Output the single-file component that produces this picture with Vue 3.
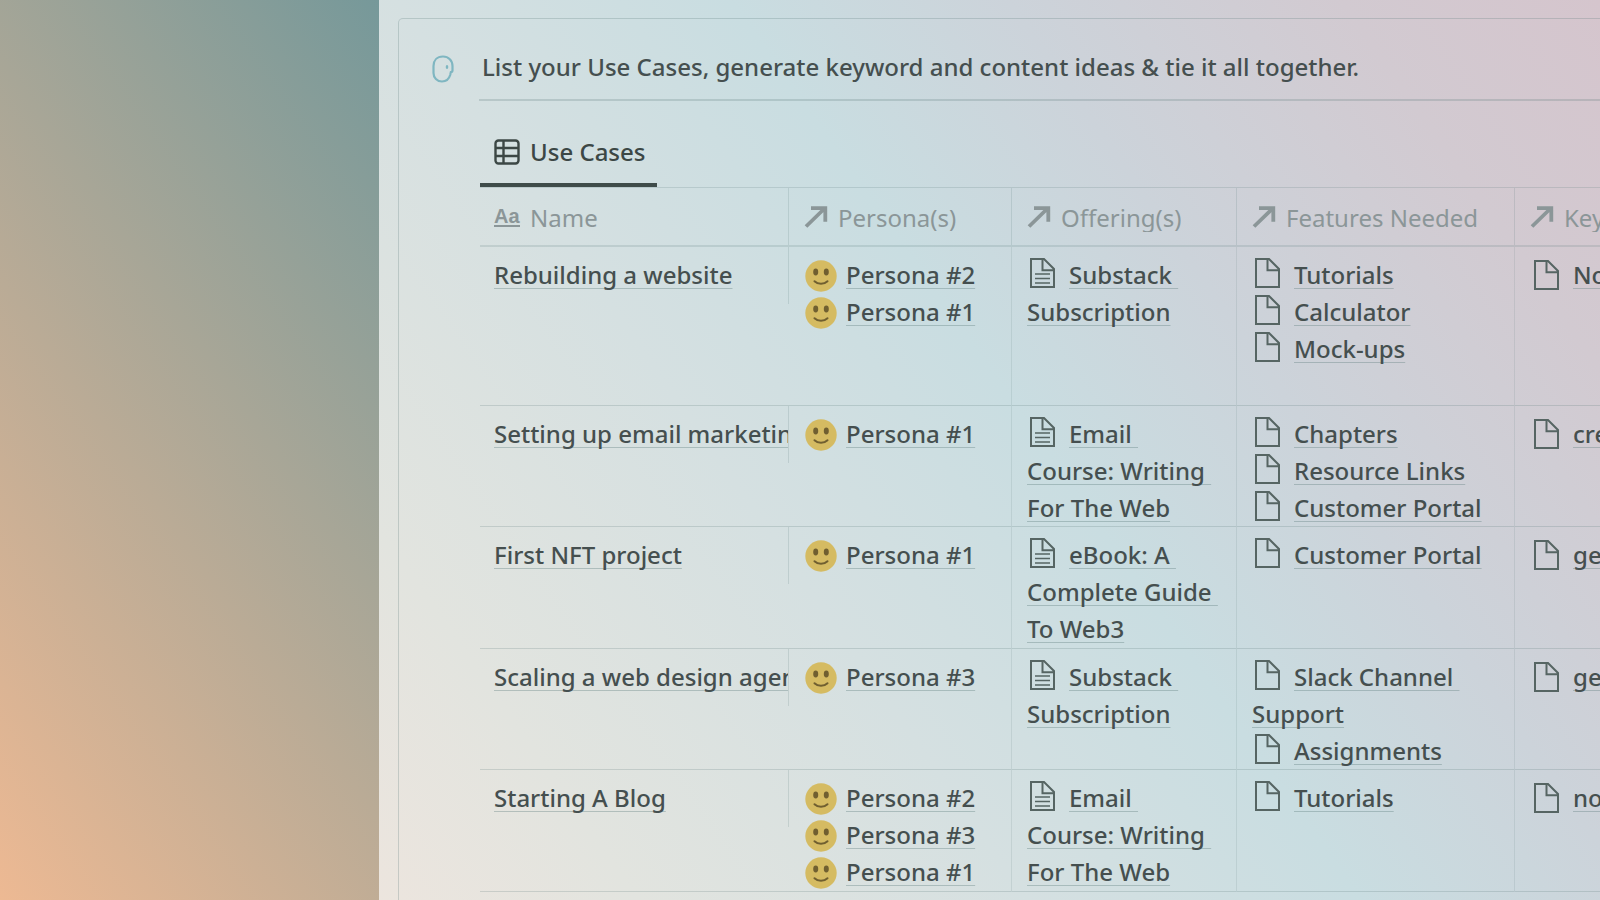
<template>
  <div class="page">
    <main class="panel">
      <section class="callout">
        <header class="callout-header">
          <svg class="head-icon" width="22" height="28" viewBox="0 0 22 28" fill="none">
            <path
              d="M11 1.500C5 1.500 1.500 5.500 1.500 11v7c0 4.500 3.500 8.500 8.500 8.500 4 0 7-2.500 8.200-6.500l.6-2.800c1.200-.1 1.700-.6 1.700-1.600V11c0-5.500-4-9.500-9.500-9.500z"
              stroke="#7fb6c1"
              stroke-width="2.200"
            />
            <ellipse cx="15" cy="12" rx="1.300" ry="1.900" fill="#7fb6c1" />
          </svg>
          <h1>List your Use Cases, generate keyword and content ideas &amp; tie it all together.</h1>
        </header>

        <div class="database">
          <nav class="tabs">
            <button class="tab" type="button">
              <svg width="26" height="26" viewBox="0 0 26 26" fill="none" stroke="currentColor" stroke-width="2.400">
                <rect x="1.500" y="1.500" width="23" height="23" rx="3" />
                <path d="M1.500 9h23M1.500 17h23M9.500 1.500v23" />
              </svg>
              <span>Use Cases</span>
            </button>
          </nav>

          <table>
            <colgroup>
              <col v-for="col in columns" :key="col.label" :class="col.size" />
            </colgroup>
            <thead>
              <tr>
                <th v-for="(col, i) in columns" :key="col.label" scope="col">
                  <div class="heading">
                    <span v-if="i === 0" class="title-icon">Aa</span>
                    <svg v-else class="arrow" width="25" height="22" viewBox="0 0 25 22" fill="none">
                      <path d="M3 20.500L21.500 2.500M8 2.200h14.300v13.600" stroke="currentColor" stroke-width="3.800" />
                    </svg>
                    <span class="label">{{ col.label }}</span>
                  </div>
                </th>
              </tr>
            </thead>
            <tbody>
              <tr v-for="row in rows" :key="row.name" :class="{ tall: row.tall }">
                <td class="name-cell">
                  <div class="name">
                    <a href="#">{{ row.name }}</a>
                  </div>
                </td>
                <td>
                  <div v-for="persona in row.personas" :key="persona" class="relation">
                    <svg class="smiley" width="32" height="32" viewBox="0 0 32 32">
                      <circle cx="16" cy="16" r="15.700" fill="#d5bb62" />
                      <ellipse cx="10.700" cy="12" rx="2.500" ry="3.400" fill="#705f30" />
                      <ellipse cx="21.300" cy="12" rx="2.500" ry="3.400" fill="#705f30" />
                      <path d="M9.500 21.300c3.600 3.400 9.400 3.400 13 0" fill="none" stroke="#705f30" stroke-width="2" stroke-linecap="round" />
                    </svg>
                    <a href="#">{{ persona }}</a>
                  </div>
                </td>
                <td>
                  <div class="relation">
                    <svg class="doc" width="25" height="30" viewBox="0 0 25 30" fill="none" stroke="currentColor" stroke-width="2">
                      <path d="M1 1h13l10 10v18H1zM12.500 1v11.300H24" />
                      <path d="M5 16h15M5 20.500h15M5 25h15" stroke-width="1.600" />
                    </svg>
                    <a href="#">{{ row.offering }}</a>
                  </div>
                </td>
                <td>
                  <div v-for="feature in row.features" :key="feature" class="relation">
                    <svg class="doc" width="25" height="30" viewBox="0 0 25 30" fill="none" stroke="currentColor" stroke-width="2">
                      <path d="M1 1h13l10 10v18H1zM12.500 1v11.300H24" />
                    </svg>
                    <a href="#">{{ feature }}</a>
                  </div>
                </td>
                <td class="keyword">
                  <div class="relation">
                    <svg class="doc" width="25" height="30" viewBox="0 0 25 30" fill="none" stroke="currentColor" stroke-width="2">
                      <path d="M1 1h13l10 10v18H1zM12.500 1v11.300H24" />
                    </svg>
                    <a href="#">{{ row.keyword }}</a>
                  </div>
                </td>
              </tr>
            </tbody>
          </table>
        </div>
      </section>
    </main>
  </div>
</template>

<script setup>
const columns = [
  { label: "Name", size: "col-name" },
  { label: "Persona(s)", size: "col-persona" },
  { label: "Offering(s)", size: "col-offering" },
  { label: "Features Needed", size: "col-features" },
  { label: "Key", size: "col-keyword" },
];

const rows = [
  {
    name: "Rebuilding a website",
    personas: ["Persona #2", "Persona #1"],
    offering: "Substack Subscription",
    features: ["Tutorials", "Calculator", "Mock-ups"],
    keyword: "No",
    tall: true,
  },
  {
    name: "Setting up email marketing",
    personas: ["Persona #1"],
    offering: "Email Course: Writing For The Web",
    features: ["Chapters", "Resource Links", "Customer Portal"],
    keyword: "cre",
  },
  {
    name: "First NFT project",
    personas: ["Persona #1"],
    offering: "eBook: A Complete Guide To Web3",
    features: ["Customer Portal"],
    keyword: "ge",
  },
  {
    name: "Scaling a web design agency",
    personas: ["Persona #3"],
    offering: "Substack Subscription",
    features: ["Slack Channel Support", "Assignments"],
    keyword: "ge",
  },
  {
    name: "Starting A Blog",
    personas: ["Persona #2", "Persona #3", "Persona #1"],
    offering: "Email Course: Writing For The Web",
    features: ["Tutorials"],
    keyword: "no",
  },
];
</script>

<style>
body {
  overflow: hidden;
}
</style>

<style scoped>
.page {
  display: flex;
  height: 100vh;
  padding-left: 379px;
  box-sizing: border-box;
  overflow: hidden;
  background: linear-gradient(55deg, #edb993 0%, #74989a 46%, #74989a 100%);
  color: #454f4f;
  font-family: "Noto Sans", "Open Sans", sans-serif;
  font-size: 24px;
  font-weight: 500;
  line-height: 37px;
}

.panel {
  display: flex;
  flex: 1;
  min-width: 0;
  padding: 18px 0 0 19px;
  background: linear-gradient(
    55deg,
    #ece5de 0%,
    #e2e4df 14%,
    #d5e0e1 35%,
    #c9dde1 53%,
    #ccd3da 68%,
    #d2cad1 86%,
    #d5c5cd 100%
  );
}

.callout {
  flex: 1;
  min-width: 0;
  padding: 29px 0 0 80px;
  border: 1px solid rgba(90, 120, 120, 0.25);
  border-width: 1px 0 0 1px;
  border-top-left-radius: 5px;
}

.callout-header {
  display: flex;
  height: 51px;
  border-bottom: 2px solid rgba(90, 120, 120, 0.24);
}

.head-icon {
  flex: none;
  margin: 7px 28px 0 -47px;
}

h1 {
  margin: 0;
  font-size: 24px;
  font-weight: 500;
  white-space: nowrap;
}

.database {
  padding-left: 1px;
  overflow: hidden;
}

.tabs {
  display: flex;
  height: 86px;
  border-bottom: 1px solid rgba(90, 120, 120, 0.2);
}

.tab {
  display: flex;
  align-items: center;
  gap: 10px;
  height: 86px;
  padding: 19px 12px 0 14px;
  box-sizing: border-box;
  border: 0;
  border-bottom: 4px solid #3f4c4a;
  background: none;
  color: #3c4745;
  font: inherit;
}

table {
  width: 1400px;
  table-layout: fixed;
  border-collapse: separate;
  border-spacing: 0;
}

.col-name {
  width: 309px;
}

.col-persona {
  width: 223px;
}

.col-offering {
  width: 225px;
}

.col-features {
  width: 278px;
}

th {
  height: 57px;
  padding: 0 0 0 14px;
  border-right: 1px solid rgba(90, 120, 120, 0.18);
  border-bottom: 2px solid rgba(90, 120, 120, 0.18);
  color: #8b9698;
  font-weight: 400;
  text-align: left;
}

.heading {
  display: flex;
  align-items: center;
  gap: 10px;
}

.title-icon {
  width: 26px;
  border-bottom: 2px solid currentColor;
  font-family: "Liberation Sans", Arial, sans-serif;
  font-size: 20px;
  font-weight: 700;
  line-height: 18px;
}

.label {
  height: 30px;
  line-height: 32px;
  overflow: hidden;
}

td {
  height: 122px;
  padding: 9px 16px 0 15px;
  box-sizing: border-box;
  border-right: 1px solid rgba(90, 120, 120, 0.14);
  border-bottom: 1px solid rgba(90, 120, 120, 0.22);
  vertical-align: top;
}

tr:nth-child(even) td {
  height: 121px;
}

.tall td {
  height: 159px;
}

td.name-cell {
  padding: 0;
  border-right: 0;
}

.name {
  height: 48px;
  padding: 9px 0 0 14px;
  border-right: 1px solid rgba(90, 120, 120, 0.18);
  overflow: hidden;
  white-space: nowrap;
}

.relation a {
  white-space: break-spaces;
}

a {
  color: inherit;
  text-decoration: underline 1px rgba(90, 120, 120, 0.35);
  text-decoration-skip-ink: none;
  text-underline-offset: 4px;
}

.smiley {
  margin: 0 9px 0 1px;
  vertical-align: -8px;
}

.doc {
  margin: 0 14px 0 3px;
  color: #566563;
  vertical-align: -4px;
}

.keyword .doc {
  margin-left: 4px;
  vertical-align: -6px;
}
</style>
